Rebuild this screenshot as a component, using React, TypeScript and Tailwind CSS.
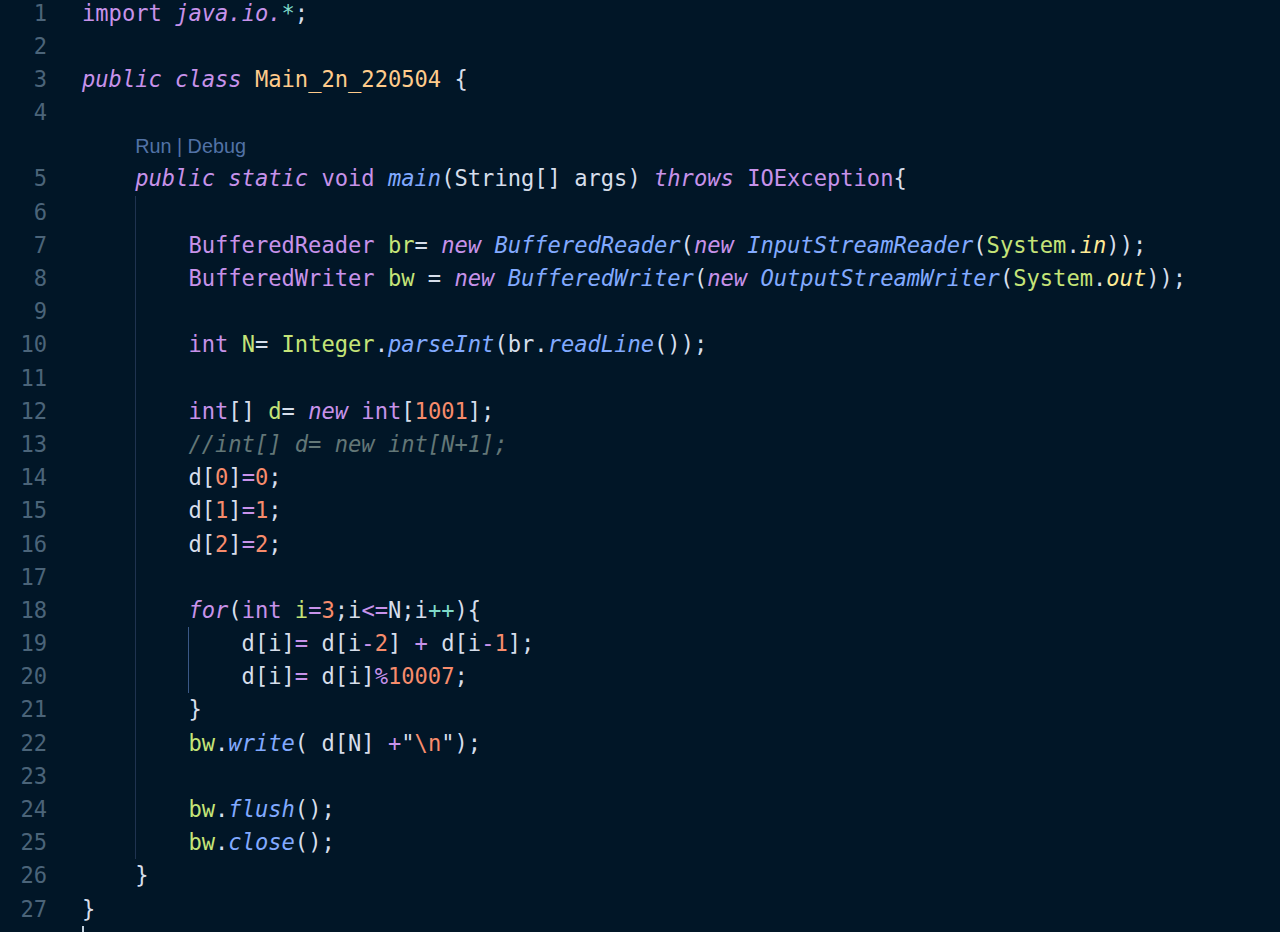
import React from "react";

type Seg = [string, string];

const P = "text-[#c792ea]";
const PI = "text-[#c792ea] italic";
const B = "text-[#82aaff] italic";
const Y = "text-[#c5e478]";
const W = "text-[#d6deeb]";
const O = "text-[#f78c6c]";
const C = "text-[#7fdbca]";
const CL = "text-[#ffcb8b]";
const CM = "text-[#637777] italic";
const YI = "text-[#ffeb95] italic";

type Line = { n: number | null; indent: number; segs: Seg[]; lens?: boolean; cursor?: boolean };

const lines: Line[] = [
  { n: 1, indent: 0, segs: [["import ", P], ["java.io.", PI], ["*", C], [";", W]] },
  { n: 2, indent: 0, segs: [] },
  { n: 3, indent: 0, segs: [["public class ", PI], ["Main_2n_220504", CL], [" {", W]] },
  { n: 4, indent: 0, segs: [] },
  { n: null, indent: 1, segs: [], lens: true },
  {
    n: 5,
    indent: 1,
    segs: [
      ["public static ", PI],
      ["void ", P],
      ["main", B],
      ["(String[] args) ", W],
      ["throws ", PI],
      ["IOException", P],
      ["{", W],
    ],
  },
  { n: 6, indent: 2, segs: [] },
  {
    n: 7,
    indent: 2,
    segs: [
      ["BufferedReader ", P],
      ["br", Y],
      ["= ", W],
      ["new ", PI],
      ["BufferedReader", B],
      ["(", W],
      ["new ", PI],
      ["InputStreamReader", B],
      ["(", W],
      ["System", Y],
      [".", W],
      ["in", YI],
      ["));", W],
    ],
  },
  {
    n: 8,
    indent: 2,
    segs: [
      ["BufferedWriter ", P],
      ["bw", Y],
      [" = ", W],
      ["new ", PI],
      ["BufferedWriter", B],
      ["(", W],
      ["new ", PI],
      ["OutputStreamWriter", B],
      ["(", W],
      ["System", Y],
      [".", W],
      ["out", YI],
      ["));", W],
    ],
  },
  { n: 9, indent: 2, segs: [] },
  {
    n: 10,
    indent: 2,
    segs: [
      ["int ", P],
      ["N", Y],
      ["= ", W],
      ["Integer", Y],
      [".", W],
      ["parseInt", B],
      ["(br.", W],
      ["readLine", B],
      ["());", W],
    ],
  },
  { n: 11, indent: 2, segs: [] },
  {
    n: 12,
    indent: 2,
    segs: [
      ["int", P],
      ["[] ", W],
      ["d", Y],
      ["= ", W],
      ["new ", PI],
      ["int", P],
      ["[", W],
      ["1001", O],
      ["];", W],
    ],
  },
  { n: 13, indent: 2, segs: [["//int[] d= new int[N+1];", CM]] },
  { n: 14, indent: 2, segs: [["d[", W], ["0", O], ["]", W], ["=", P], ["0", O], [";", W]] },
  { n: 15, indent: 2, segs: [["d[", W], ["1", O], ["]", W], ["=", P], ["1", O], [";", W]] },
  { n: 16, indent: 2, segs: [["d[", W], ["2", O], ["]", W], ["=", P], ["2", O], [";", W]] },
  { n: 17, indent: 2, segs: [] },
  {
    n: 18,
    indent: 2,
    segs: [
      ["for", PI],
      ["(", W],
      ["int ", P],
      ["i", Y],
      ["=", P],
      ["3", O],
      [";i", W],
      ["<=", P],
      ["N;i", W],
      ["++", C],
      ["){", W],
    ],
  },
  {
    n: 19,
    indent: 3,
    segs: [
      ["d[i]", W],
      ["=", P],
      [" d[i", W],
      ["-", P],
      ["2", O],
      ["] ", W],
      ["+", P],
      [" d[i", W],
      ["-", P],
      ["1", O],
      ["];", W],
    ],
  },
  {
    n: 20,
    indent: 3,
    segs: [
      ["d[i]", W],
      ["=", P],
      [" d[i]", W],
      ["%", P],
      ["10007", O],
      [";", W],
    ],
  },
  { n: 21, indent: 2, segs: [["}", W]] },
  {
    n: 22,
    indent: 2,
    segs: [
      ["bw", Y],
      [".", W],
      ["write", B],
      ["( d[N] ", W],
      ["+", P],
      ['"', W],
      ["\\n", O],
      ['"', W],
      [");", W],
    ],
  },
  { n: 23, indent: 2, segs: [] },
  { n: 24, indent: 2, segs: [["bw", Y], [".", W], ["flush", B], ["();", W]] },
  { n: 25, indent: 2, segs: [["bw", Y], [".", W], ["close", B], ["();", W]] },
  { n: 26, indent: 1, segs: [["}", W]] },
  { n: 27, indent: 0, segs: [["}", W]] },
  { n: null, indent: 0, segs: [], cursor: true },
];

function guideClass(n: number | null, level: number): string {
  if (n === null) return "";
  if (level === 1 && n >= 6 && n <= 25) return "border-l border-[#1f3350]";
  if (level === 2 && n >= 19 && n <= 20) return "border-l border-[#3a5886]";
  return "";
}

export default function App() {
  return (
    <div
      className="w-full h-[932px] overflow-hidden bg-[#011627] text-[22.1px]"
      style={{ fontFamily: '"DejaVu Sans Mono", "Liberation Mono", monospace' }}
    >
      <div className="-mt-[3.5px] flex flex-col">
        {lines.map((ln, idx) => (
          <div key={idx} className="flex h-[33.2px] leading-[33.2px]">
            <div className="w-[47px] shrink-0 text-right text-[#4b6479]">{ln.n ?? ""}</div>
            <div className="pl-[35px] flex h-full whitespace-pre">
              {Array.from({ length: ln.indent }).map((_, k) => (
                <span key={k} className={`inline-block w-[4ch] h-full ${guideClass(ln.n, k)}`} />
              ))}
              {ln.lens ? (
                <span
                  className="text-[19.8px] text-[#5272a6] pt-[1px]"
                  style={{ fontFamily: '"Liberation Sans", Arial, sans-serif' }}
                >
                  Run | Debug
                </span>
              ) : null}
              {ln.cursor ? <span className="inline-block w-[2px] h-full bg-[#c5d3e0]" /> : null}
              {ln.segs.map((s, j) => (
                <span key={j} className={s[1]}>
                  {s[0]}
                </span>
              ))}
            </div>
          </div>
        ))}
      </div>
    </div>
  );
}
